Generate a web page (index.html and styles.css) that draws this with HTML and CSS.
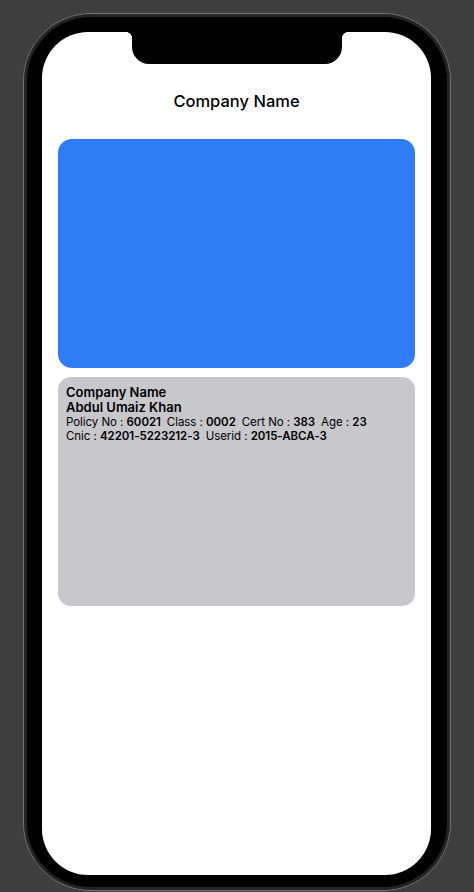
FILE: index.html
```html
<!DOCTYPE html>
<html lang="en">
<head>
<meta charset="utf-8">
<title>Company Name</title>
<link rel="stylesheet" href="styles.css">
</head>
<body>
  <div class="phone">
    <div class="screen">
      <div class="notch"></div>
      <h1 class="title">Company Name</h1>
      <div class="card card-blue"></div>
      <div class="card card-grey">
        <div class="company">Company Name</div>
        <div class="name">Abdul Umaiz Khan</div>
        <div class="details">
          <span class="item">Policy No : <b>60021</b></span>
          <span class="item">Class : <b>0002</b></span>
          <span class="item">Cert No : <b>383</b></span>
          <span class="item">Age : <b>23</b></span>
        </div>
        <div class="details">
          <span class="item">Cnic : <b>42201-5223212-3</b></span>
          <span class="item">Userid : <b>2015-ABCA-3</b></span>
        </div>
      </div>
    </div>
  </div>
</body>
</html>
```

FILE: styles.css
```css
html, body {
  margin: 0;
  padding: 0;
}
body {
  background: #3e3e3e;
  font-family: Inter, "Noto Sans", "Liberation Sans", sans-serif;
  color: #000;
  width: 474px;
  height: 892px;
  overflow: hidden;
}
.phone {
  box-sizing: border-box;
  margin: 13px 0 0 23px;
  width: 428px;
  height: 878px;
  border: 1px solid #767676;
  border-radius: 68px;
  background: #000;
  box-shadow: inset 0 0 0 3px #242424;
  padding: 18px 19px 15px 18px;
}
.screen {
  position: relative;
  height: 100%;
  background: #fff;
  border-radius: 46px;
  padding: 0 16px;
  box-sizing: border-box;
  display: flex;
  flex-direction: column;
}
.notch {
  position: absolute;
  top: 0;
  left: 90px;
  width: 210px;
  height: 32px;
  background: #000;
  border-radius: 0 0 17px 17px;
}
.notch::before,
.notch::after {
  content: "";
  position: absolute;
  top: 0;
  width: 7px;
  height: 7px;
}
.notch::before {
  left: -7px;
  background: radial-gradient(circle at 0 100%, transparent 7px, #000 7.5px);
}
.notch::after {
  right: -7px;
  background: radial-gradient(circle at 100% 100%, transparent 7px, #000 7.5px);
}
.title {
  margin: 58px 0 0;
  font-size: 16.5px;
  line-height: 22px;
  font-weight: 500;
  text-align: center;
  letter-spacing: 0;
}
.card {
  border-radius: 14px;
  height: 229px;
  box-sizing: border-box;
}
.card-blue {
  margin-top: 27px;
  background: #2f7cf6;
}
.card-grey {
  margin-top: 9px;
  background: #c7c7cc;
  padding: 8px 8px;
  border-radius: 13px;
}
.company, .name {
  font-size: 13px;
  line-height: 15px;
  font-weight: 600;
}
.details {
  font-size: 11.5px;
  line-height: 14px;
  display: flex;
  gap: 6px;
  letter-spacing: -0.05px;
}
.details b {
  font-weight: 600;
}
```
